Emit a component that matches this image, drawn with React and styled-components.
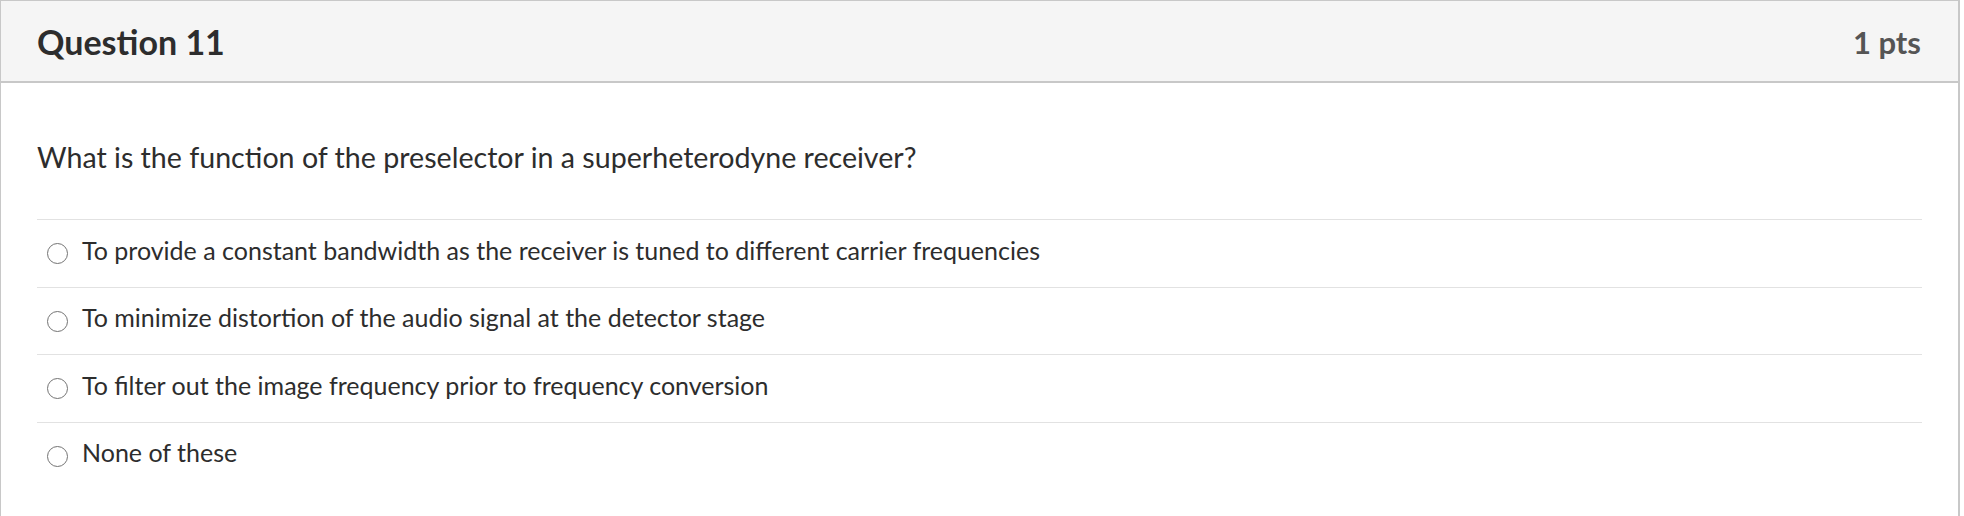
import React from "react";
import styled, { createGlobalStyle } from "styled-components";

const Global = createGlobalStyle`
  html, body { margin: 0; padding: 0; background: #fff; }
  body { font-family: Lato, "Open Sans", "Liberation Sans", sans-serif; color: #2d2d2d; }
`;

const Card = styled.div`
  width: 1957px;
  min-height: 560px;
  border-top: 1px solid #c8c8c8;
  border-left: 1px solid #c8c8c8;
  border-right: 2px solid #c8c8c8;
  background: #fff;
`;

const Header = styled.div`
  height: 82px;
  box-sizing: border-box;
  background: #f5f5f5;
  border-bottom: 2px solid #c8c8c8;
  display: flex;
  align-items: center;
  justify-content: space-between;
  padding: 0 37px 0 36px;
`;

const Title = styled.h2`
  margin: 0;
  font-size: 34px;
  font-weight: 700;
  color: #2d2d2d;
  line-height: 1.2;
  padding-top: 2px;
`;

const Points = styled.div`
  font-size: 31px;
  font-weight: 700;
  color: #555;
  line-height: 1.2;
  padding-top: 3px;
`;

const Body = styled.div`
  padding: 53px 36px 0 36px;
`;

const QuestionText = styled.p`
  margin: 0 0 41px 0;
  font-size: 28.6px;
  line-height: 42px;
  color: #2d2d2d;
`;

const AnswerList = styled.div`
  display: flex;
  flex-direction: column;
`;

const Answer = styled.label`
  display: flex;
  align-items: flex-start;
  gap: 14px;
  border-top: 1px solid #e2e2e2;
  padding: 11.5px 0 17.5px 0;
  font-size: 25px;
  line-height: 37.5px;
  color: #2d2d2d;
  cursor: pointer;
`;

const Radio = styled.span`
  flex: none;
  box-sizing: border-box;
  width: 21px;
  height: 21px;
  margin-left: 9.5px;
  margin-top: 11.5px;
  margin-right: 0.5px;
  border-radius: 50%;
  border: 1.7px solid #737373;
  background: #fff;
`;

const answers = [
  "To provide a constant bandwidth as the receiver is tuned to different carrier frequencies",
  "To minimize distortion of the audio signal at the detector stage",
  "To filter out the image frequency prior to frequency conversion",
  "None of these",
];

export default function App() {
  return (
    <>
      <Global />
      <Card>
        <Header>
          <Title>Question 11</Title>
          <Points>1 pts</Points>
        </Header>
        <Body>
          <QuestionText>
            What is the function of the preselector in a superheterodyne receiver?
          </QuestionText>
          <AnswerList>
            {answers.map((a) => (
              <Answer key={a}>
                <Radio />
                <span>{a}</span>
              </Answer>
            ))}
          </AnswerList>
        </Body>
      </Card>
    </>
  );
}
